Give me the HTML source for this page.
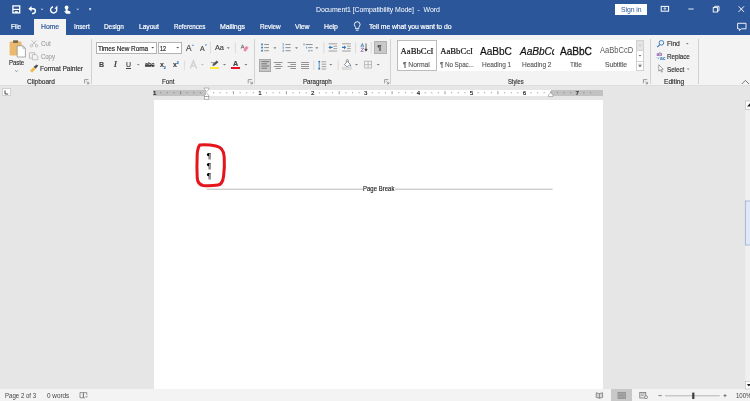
<!DOCTYPE html>
<html><head><meta charset="utf-8"><title>Word</title>
<style>
*{margin:0;padding:0;box-sizing:border-box}
html,body{width:750px;height:401px;overflow:hidden;background:#e6e6e6}
body{position:relative;font-family:"Liberation Sans","DejaVu Sans",sans-serif;font-size:7.2px;color:#444;line-height:1}
.a{position:absolute;white-space:nowrap}
#root{position:absolute;left:0;top:0;width:750px;height:401px;will-change:transform;transform:translateZ(0)}
#blue{left:0;top:0;width:750px;height:35px;background:#2b579a}
#ribbon{left:0;top:35px;width:750px;height:51.4px;background:#f3f3f3;border-bottom:1px solid #dedede}
#hometab{left:34px;top:19px;width:32px;height:17px;background:#f3f3f3}
.w{color:#fff}
.tab{-webkit-text-stroke:0.2px #fff;top:23.3px;font-size:7.9px;color:#fff;letter-spacing:-0.1px;transform:scaleX(.93);transform-origin:0 0}
.rt{-webkit-text-stroke:0.18px currentColor;font-size:7.8px;color:#333;letter-spacing:-0.1px;transform:scaleX(.92);transform-origin:0 0}
.gl{-webkit-text-stroke:0.18px currentColor;top:78.4px;font-size:7.7px;color:#333;letter-spacing:-0.05px;transform:scaleX(.93);transform-origin:0 0}
.sep{width:1px;background:#d2d2d2;top:39px;height:45px}
.ssep{width:1px;background:#d8d8d8;height:11px}
.dis{color:#a6a6a6}
.arr{width:0;height:0;border-left:1.8px solid transparent;border-right:1.8px solid transparent;border-top:2px solid #666}
svg{position:absolute;overflow:visible}
.pil{left:206.4px;font-size:8.6px;font-weight:bold;color:#000;font-family:"Liberation Serif",serif}
.st1{font-family:"Liberation Serif",serif;font-size:8.7px;color:#111;-webkit-text-stroke:0.2px #111}
.st2{font-size:11px;color:#111;letter-spacing:-0.1px;transform:scaleX(.925);transform-origin:0 0;-webkit-text-stroke:0.2px #111}
.sl{-webkit-text-stroke:0.12px currentColor;top:61px;font-size:7.7px;color:#555;letter-spacing:-0.1px;transform:scaleX(.93);transform-origin:0 0}
</style></head><body>
<div id="root">
<div class="a" id="blue"></div>
<div class="a" id="ribbon"></div>
<div class="a" id="hometab"></div>

<!-- TITLEBAR -->
<div class="a w" style="left:315.8px;top:5.5px;font-size:7.9px;letter-spacing:-0.1px;transform:scaleX(0.882);transform-origin:0 0">Document1 [Compatibility Mode]&nbsp; -&nbsp; Word</div>
<div class="a" style="left:615px;top:4.2px;width:32px;height:10.4px;background:#fff"></div>
<div class="a" style="left:620.8px;top:5.7px;font-size:7.9px;color:#2b579a;letter-spacing:-0.1px;transform:scaleX(0.870);transform-origin:0 0">Sign in</div>

<!-- TABS -->
<div class="a tab" style="left:11.3px;transform:scaleX(0.811);transform-origin:0 0">File</div>
<div class="a tab" style="left:40.7px;color:#2b579a;-webkit-text-stroke:0.2px #2b579a;transform:scaleX(0.871);transform-origin:0 0">Home</div>
<div class="a tab" style="left:73.7px;transform:scaleX(0.815);transform-origin:0 0">Insert</div>
<div class="a tab" style="left:104.3px;transform:scaleX(0.822);transform-origin:0 0">Design</div>
<div class="a tab" style="left:139.2px;transform:scaleX(0.857);transform-origin:0 0">Layout</div>
<div class="a tab" style="left:174.0px;transform:scaleX(0.793);transform-origin:0 0">References</div>
<div class="a tab" style="left:220.4px;transform:scaleX(0.881);transform-origin:0 0">Mailings</div>
<div class="a tab" style="left:260.1px;transform:scaleX(0.811);transform-origin:0 0">Review</div>
<div class="a tab" style="left:295.0px;transform:scaleX(0.875);transform-origin:0 0">View</div>
<div class="a tab" style="left:324.2px;transform:scaleX(0.871);transform-origin:0 0">Help</div>
<div class="a tab" style="left:368.5px;transform:scaleX(0.870);transform-origin:0 0">Tell me what you want to do</div>

<!-- CLIPBOARD -->
<div class="a rt" style="left:8.9px;top:59px;transform:scaleX(0.776);transform-origin:0 0">Paste</div>
<div class="a rt dis" style="left:40.5px;top:40px;transform:scaleX(0.811);transform-origin:0 0">Cut</div>
<div class="a rt dis" style="left:40.5px;top:52.6px;transform:scaleX(0.780);transform-origin:0 0">Copy</div>
<div class="a rt" style="left:40.0px;top:65.2px;transform:scaleX(0.857);transform-origin:0 0">Format Painter</div>
<div class="a gl" style="left:27.1px;transform:scaleX(0.856);transform-origin:0 0">Clipboard</div>
<div class="a sep" style="left:91px"></div>

<!-- FONT -->
<div class="a" style="left:96px;top:41.5px;width:60.5px;height:12.5px;background:#fff;border:1px solid #b4b4b4"></div>
<div class="a rt" style="left:98.0px;top:44.6px;color:#222;transform:scaleX(0.830);transform-origin:0 0">Times New Roma</div>
<div class="a" style="left:158.3px;top:41.5px;width:23.6px;height:12.5px;background:#fff;border:1px solid #b4b4b4"></div>
<div class="a rt" style="left:160.3px;top:44.6px;color:#222;transform:scaleX(0.707);transform-origin:0 0">12</div>
<div class="a rt" style="left:99.3px;top:61px;font-weight:bold;color:#444;font-size:7.6px">B</div>
<div class="a rt" style="left:113.6px;top:61px;font-style:italic;font-family:'Liberation Serif',serif;font-weight:bold;color:#444;font-size:8px">I</div>
<div class="a rt" style="left:125.8px;top:61px;color:#444;font-size:7.6px;text-decoration:underline">U</div>
<div class="a rt" style="left:145.3px;top:61.6px;color:#444;font-size:6.4px;text-decoration:line-through;font-weight:bold;letter-spacing:-0.3px">abc</div>
<div class="a rt" style="left:160px;top:61.2px;color:#444;font-size:7.6px;font-weight:bold">x<span style="font-size:4px;color:#2e75b6;vertical-align:-1.5px">2</span></div>
<div class="a rt" style="left:173.3px;top:61.2px;color:#444;font-size:7.6px;font-weight:bold">x<span style="font-size:4px;color:#2e75b6;vertical-align:3px">2</span></div>
<div class="a rt" style="left:186.4px;top:43.6px;color:#444;font-size:9px">A</div>
<div class="a rt" style="left:200px;top:44.8px;color:#444;font-size:7.6px">A</div>
<div class="a rt" style="left:215px;top:43.8px;color:#444;font-size:8px">Aa</div>
<div class="a rt" style="left:233.2px;top:60.4px;color:#444;font-size:7.8px;font-weight:bold">A</div>
<div class="a" style="left:231.3px;top:67.2px;width:9px;height:2px;background:#e81123"></div>
<div class="a" style="left:210px;top:67px;width:9px;height:2.2px;background:#ffeb3b"></div>
<div class="a gl" style="left:162.0px;transform:scaleX(0.816);transform-origin:0 0">Font</div>
<div class="a sep" style="left:254px"></div>

<!-- PARAGRAPH -->
<div class="a" style="left:259px;top:58.8px;width:12.4px;height:13px;background:#c8c8c8;border:1px solid #a8a8a8"></div>
<div class="a" style="left:374px;top:41.3px;width:12.6px;height:12.8px;background:#c8c8c8;border:1px solid #b0b0b0"></div>
<div class="a" style="left:377.3px;top:43.6px;font-size:8px;color:#444;font-weight:bold">¶</div>
<div class="a gl" style="left:303.3px;transform:scaleX(0.810);transform-origin:0 0">Paragraph</div>
<div class="a sep" style="left:390px"></div>

<!-- STYLES -->
<div class="a" style="left:397px;top:40px;width:239px;height:31px;background:#fff"></div>
<div class="a" style="left:636px;top:40px;width:8px;height:31px;background:#fff;border:1px solid #d0d0d0"></div>
<div class="a" style="left:636px;top:40px;width:8px;height:10.5px;background:#e4e4e4;border:1px solid #d0d0d0"></div>
<div class="a" style="left:636px;top:60.5px;width:8px;height:10.5px;border:1px solid #d0d0d0"></div>
<div class="a" style="left:397.3px;top:40px;width:39.6px;height:31px;border:1.7px solid #bcbcbc"></div>
<div class="a st1" style="left:400.6px;top:46.9px">AaBbCcI</div>
<div class="a st1" style="left:440.2px;top:46.9px">AaBbCcI</div>
<div class="a st2" style="left:480.4px;top:45.8px">AaBbC</div>
<div class="a st2" style="left:520px;top:45.8px;font-style:italic">AaBbC<span style="display:inline-block;width:2.3px;overflow:hidden;vertical-align:bottom">c</span></div>
<div class="a st2" style="left:560px;top:45.8px;-webkit-text-stroke:0.3px #111">AaBbC</div>
<div class="a" style="left:599.6px;top:46.2px;font-size:8.7px;color:#5a5a5a;letter-spacing:0px;transform:scaleX(.87);transform-origin:0 0">AaBbCcD</div>
<div class="a sl" style="left:403.3px;transform:scaleX(0.883);transform-origin:0 0">¶ Normal</div>
<div class="a sl" style="left:440.0px;transform:scaleX(0.823);transform-origin:0 0">¶ No Spac...</div>
<div class="a sl" style="left:481.7px;transform:scaleX(0.849);transform-origin:0 0">Heading 1</div>
<div class="a sl" style="left:521.7px;transform:scaleX(0.858);transform-origin:0 0">Heading 2</div>
<div class="a sl" style="left:570.3px;transform:scaleX(0.851);transform-origin:0 0">Title</div>
<div class="a sl" style="left:604.7px;transform:scaleX(0.886);transform-origin:0 0">Subtitle</div>
<div class="a gl" style="left:508.0px;transform:scaleX(0.756);transform-origin:0 0">Styles</div>
<div class="a sep" style="left:650px"></div>

<!-- EDITING -->
<div class="a rt" style="left:666.8px;top:39.8px;transform:scaleX(0.866);transform-origin:0 0">Find</div>
<div class="a rt" style="left:666.8px;top:52.6px;transform:scaleX(0.817);transform-origin:0 0">Replace</div>
<div class="a rt" style="left:666.8px;top:65.8px;transform:scaleX(0.816);transform-origin:0 0">Select</div>
<div class="a gl" style="left:663.8px;transform:scaleX(0.872);transform-origin:0 0">Editing</div>
<div class="a sep" style="left:698px"></div>

<!-- RULER -->
<div class="a" id="ruler" style="left:153.4px;top:89.6px;width:449.6px;height:6.2px;background:#c2c2c2"></div>
<div class="a" style="left:206px;top:89.6px;width:345px;height:6.2px;background:#fff"></div>
<div class="a" style="left:2px;top:88.4px;width:8.6px;height:7.8px;background:#fff;border:1px solid #d0d0d0"></div>

<!-- DOC -->
<div class="a" id="page" style="left:154px;top:99.5px;width:449.4px;height:290px;background:#fff"></div>

<div class="a pil" style="top:151.6px">¶</div>
<div class="a pil" style="top:162.2px">¶</div>
<div class="a pil" style="top:172px">¶</div>
<div class="a" style="left:363.3px;top:185.6px;font-size:6.4px;color:#222;letter-spacing:0.05px;-webkit-text-stroke:0.15px #222;transform:scaleX(0.926);transform-origin:0 0">Page Break</div>
<!-- STATUS -->
<div class="a" id="status" style="left:0;top:389px;width:750px;height:12px;background:#f3f3f3"></div>
<div class="a" style="left:611.3px;top:389.4px;width:21px;height:11.6px;background:#c8c8c8"></div>
<div class="a" style="left:4.9px;top:392.8px;font-size:6.8px;color:#444;transform:scaleX(0.894);transform-origin:0 0">Page 2 of 3</div>
<div class="a" style="left:46.7px;top:392.8px;font-size:6.8px;color:#444;transform:scaleX(0.936);transform-origin:0 0">0 words</div>
<div class="a" style="left:735.5px;top:392.8px;font-size:6.6px;color:#444;transform:scaleX(0.919);transform-origin:0 0">100%</div>

<!-- ICONS -->
<svg id="ico" style="left:0;top:0" width="750" height="401" viewBox="0 0 750 401" fill="none">
<!--ICONS_BEGIN-->
<!-- ===== title bar icons ===== -->
<g stroke="#fff" stroke-width="1" fill="none">
  <rect x="12.9" y="5.9" width="6.8" height="7" stroke-width="1.3"/>
  <path d="M13 9.4 H19.6" stroke-width="1.2"/>
  <rect x="14.8" y="11.2" width="3" height="1.8" fill="#fff" stroke="none"/>
  <!-- undo -->
  <path d="M29 8.7 H33 a2.4 2.4 0 0 1 0 4.8 H32" stroke-width="1.5"/>
  <path d="M31.6 5.9 L28.4 8.7 L31.6 11.5 Z" fill="#fff" stroke="none"/>
  <!-- redo -->
  <path d="M53 6.8 A3.1 3.1 0 1 0 56.4 8.4" stroke-width="1.4"/>
  <path d="M54.4 8.8 H57.4 V5.6 Z" fill="#fff" stroke="none"/>
  <!-- window buttons -->
  <path d="M688.4 9 H693.6" stroke-width="0.9"/>
  <rect x="713.2" y="7.6" width="4.4" height="4.4" stroke-width="0.9"/>
  <path d="M714.6 7.6 V6.3 H719 V10.7 H717.6" stroke-width="0.9"/>
  <path d="M738.6 6.3 L744 11.9 M744 6.3 L738.6 11.9" stroke-width="0.95"/>
  <!-- ribbon display -->
  <rect x="661.2" y="6.4" width="7.4" height="4.8" stroke-width="1"/>
  <path d="M664.9 10.2 V7.8 M663.6 8.9 L664.9 7.6 L666.2 8.9" stroke-width="0.8"/>
  <!-- comment -->
  <path d="M737.6 23.3 H746 V28.8 H741.4 L739.4 30.6 V28.8 H737.6 Z" stroke-width="0.9"/>
  <!-- lightbulb -->
  <path d="M355.6 28.6 V27.6 C355.6 26.6 354.3 26 354.3 24.6 A2.9 2.9 0 0 1 360.1 24.6 C360.1 26 358.8 26.6 358.8 27.6 V28.6 Z M355.8 30.2 H358.6" stroke-width="0.9"/>
</g>
<g fill="#fff">
  <!-- touch mode -->
  <circle cx="66.6" cy="7.4" r="1.9"/>
  <path d="M65.6 9 H67.6 V10.6 L70.4 11.4 V13.8 H66.4 L64.2 11.6 L64.9 10.9 L65.6 11.4 Z"/>
  <!-- customize -->
  <rect x="89" y="8.1" width="2.2" height="0.7"/>
  <path d="M89 9.3 H91.2 L90.1 10.5 Z"/>
</g>
<g fill="#c3d0e8">
  <path d="M40.6 8.7 H43.4 L42 10.2 Z"/>
  <path d="M76.4 8.7 H79.2 L77.8 10.2 Z"/>
</g>

<!-- ===== clipboard group ===== -->
<rect x="9.6" y="41.6" width="12" height="14" rx="0.8" fill="#e9b96e"/>
<rect x="13" y="40.3" width="5.2" height="2.6" rx="0.6" fill="#7a6a4f"/>
<path d="M17.2 45.8 H23 L25.4 48.2 V57 H17.2 Z" fill="#fff" stroke="#8a8a8a" stroke-width="0.7"/>
<path d="M23 45.8 V48.2 H25.4" stroke="#8a8a8a" stroke-width="0.6"/>
<path d="M15.2 70.4 L16.5 71.7 L17.8 70.4" stroke="#666" stroke-width="0.7"/>
<!-- cut (disabled) -->
<g stroke="#b4b4b4" stroke-width="0.8">
  <path d="M31.6 40.4 L36 45 M36.4 40.4 L32 45"/>
  <circle cx="31.4" cy="45.8" r="1.2"/><circle cx="36.6" cy="45.8" r="1.2"/>
</g>
<!-- copy (disabled) -->
<g stroke="#b4b4b4" stroke-width="0.8" fill="#f3f3f3">
  <rect x="29.6" y="52.8" width="5" height="5.4"/>
  <path d="M32.4 54.6 H36 L37.8 56.2 V59.8 H32.4 Z"/>
</g>
<!-- format painter -->
<path d="M30 70.8 L33.4 67.2 L35.4 69 L32.2 72.4 Z" fill="#efb73e"/>
<path d="M33.6 66.8 L36.8 64.4 L38.2 65.8 L35.6 68.8 Z" fill="#4a4a4a"/>
<!-- launchers -->
<g id="lnch" stroke="#777" stroke-width="0.7">
  <path d="M84.6 83.4 V79.6 H88.4"/>
  <path d="M86.4 81.4 L88.6 83.6 M88.8 81.8 V83.8 H86.8"/>
</g>
<use href="#lnch" x="163.6"/>
<use href="#lnch" x="300"/>
<use href="#lnch" x="558.8"/>

<!-- ===== font group ===== -->
<g fill="#555">
  <path d="M151.2 47 H154.2 L152.7 48.6 Z"/>
  <path d="M176.2 47 H179.2 L177.7 48.6 Z"/>
  <path d="M136.9 64 H139.7 L138.3 65.5 Z" fill="#888"/>
  <path d="M226.8 47.3 H229.8 L228.3 48.9 Z" fill="#777"/>
  <path d="M201 64 H203.8 L202.4 65.5 Z" fill="#bbb"/>
  <path d="M223 64 H226 L224.5 65.6 Z" fill="#777"/>
  <path d="M244.4 64 H247.4 L245.9 65.6 Z" fill="#777"/>
</g>
<!-- grow/shrink arrows -->
<path d="M191.8 45.8 L192.9 44.4 L194 45.8 Z" fill="#2e75b6"/>
<path d="M204.8 44.6 L205.9 46 L207 44.6 Z" fill="#2e75b6"/>
<!-- separators -->
<g stroke="#d4d4d4" stroke-width="0.8">
  <path d="M210.4 42 V53.5 M235.4 42 V53.5 M184.4 60.5 V70 M323.8 42 V53.5 M355.6 42 V53.5 M371.2 42 V53.5 M313.8 60.5 V70 M338.2 60.5 V70"/>
</g>
<!-- clear formatting -->
<path d="M243.2 50.2 L246.2 45.8 L248.6 47.4 L245.6 51.8 Z" fill="#ee8aa6"/>
<path d="M241 48.6 L242.6 44.8 L244.2 48.6 M241.6 47.4 H243.6" stroke="#555" stroke-width="0.7"/>
<!-- text effects A -->
<path d="M190.2 68.4 L193.4 61 L196.6 68.4 M191.4 65.8 H195.4" stroke="#c3c3c3" stroke-width="1.3"/>
<path d="M190.2 68.4 L193.4 61 L196.6 68.4 M191.4 65.8 H195.4" stroke="#f3f3f3" stroke-width="0.4"/>
<!-- highlighter pen -->
<path d="M212.4 66 L213 63.8 L216.8 60.6 L218.4 62.2 L214.6 65.6 Z" fill="#555"/>
<path d="M210.8 62.6 h3.2" stroke="#666" stroke-width="0.6"/>
<!-- ===== paragraph group ===== -->
<!-- bullets -->
<g fill="#2e75b6"><rect x="261.2" y="43.6" width="1.7" height="1.7"/><rect x="261.2" y="46.7" width="1.7" height="1.7"/><rect x="261.2" y="49.8" width="1.7" height="1.7"/></g>
<g stroke="#777" stroke-width="0.8"><path d="M264.2 44.5 H269 M264.2 47.6 H269 M264.2 50.7 H269"/></g>
<!-- numbering -->
<g stroke="#2e75b6" stroke-width="0.7"><path d="M283.2 43.2 V45.6 M283.2 46.4 V48.8 M283.2 49.6 V52"/></g>
<g stroke="#777" stroke-width="0.8"><path d="M285.4 44.5 H290.6 M285.4 47.6 H290.6 M285.4 50.7 H290.6"/></g>
<!-- multilevel -->
<g stroke="#2e75b6" stroke-width="0.7"><path d="M304 43.4 V45.4 M306.6 46.6 V48.6 M309 49.8 V51.8"/></g>
<g stroke="#777" stroke-width="0.8"><path d="M305.6 44.5 H312.6 M308.2 47.6 H312.6 M310.6 50.7 H312.6"/></g>
<g fill="#777">
  <path d="M273.4 47.3 H276.4 L274.9 48.9 Z"/>
  <path d="M295 47.3 H298 L296.5 48.9 Z"/>
  <path d="M315.4 47.3 H318.4 L316.9 48.9 Z"/>
  <path d="M329.3 64 H332.3 L330.8 65.6 Z"/>
  <path d="M355 64 H358 L356.5 65.6 Z"/>
  <path d="M376.7 64 H379.7 L378.2 65.6 Z"/>
</g>
<!-- decrease indent -->
<g stroke="#8a8a8a" stroke-width="0.8"><path d="M328.6 43.8 H337.2 M333.4 46.2 H337.2 M333.4 48.6 H337.2 M328.6 51 H337.2"/></g>
<path d="M328.4 47.4 L330.6 45.6 V46.8 H332.6 V48 H330.6 V49.2 Z" fill="#2e75b6"/>
<!-- increase indent -->
<g stroke="#8a8a8a" stroke-width="0.8"><path d="M342 43.8 H350.8 M347 46.2 H350.8 M347 48.6 H350.8 M342 51 H350.8"/></g>
<path d="M346.2 47.4 L344 45.6 V46.8 H342 V48 H344 V49.2 Z" fill="#2e75b6"/>
<!-- sort -->
<path d="M360.8 47 L362.3 43.4 L363.8 47 M361.3 45.9 H363.3" stroke="#2e75b6" stroke-width="0.7"/>
<path d="M360.9 48.2 H363.7 L360.9 51.4 H363.7" stroke="#8a4fa8" stroke-width="0.7"/>
<path d="M366 43.4 V50 M364.8 49.2 L366 51.2 L367.2 49.2 Z" stroke="#444" stroke-width="0.8" fill="#444"/>
<!-- align left (selected) -->
<g stroke="#666" stroke-width="0.8"><path d="M261.4 61.6 H269.2 M261.4 63.8 H267 M261.4 66 H269.2 M261.4 68.2 H267"/></g>
<!-- center -->
<g stroke="#7a7a7a" stroke-width="0.8"><path d="M273.8 62.5 H282.6 M275.6 64.5 H280.8 M273.8 66.5 H282.6 M275.6 68.5 H280.8"/></g>
<!-- right -->
<g stroke="#7a7a7a" stroke-width="0.8"><path d="M287.6 62.5 H296 M290.4 64.5 H296 M287.6 66.5 H296 M290.4 68.5 H296"/></g>
<!-- justify -->
<g stroke="#7a7a7a" stroke-width="0.8"><path d="M301 62.5 H309 M301 64.5 H309 M301 66.5 H309 M301 68.5 H309"/></g>
<!-- line spacing -->
<g stroke="#8a8a8a" stroke-width="0.8"><path d="M321.6 61.8 H326.2 M321.6 64.2 H326.2 M321.6 66.6 H326.2 M321.6 69 H326.2"/></g>
<path d="M319.2 61 V69.4" stroke="#2e75b6" stroke-width="0.8"/>
<path d="M317.9 62.2 L319.2 60.4 L320.5 62.2 Z M317.9 68.2 L319.2 70 L320.5 68.2 Z" fill="#2e75b6"/>
<!-- shading -->
<path d="M344.4 64.6 L347.4 61.4 L350.4 64.4 L347.2 67 Z" fill="#fff" stroke="#666" stroke-width="0.7"/>
<path d="M346.4 62.2 V60.6 a1 1 0 0 1 2 0 V62" stroke="#666" stroke-width="0.6"/>
<path d="M350.6 64.6 q1 1.4 0 2.2 q-1 -0.8 0 -2.2" fill="#2e75b6"/>
<rect x="342.6" y="67.6" width="8.6" height="1.8" fill="#e2e2e2" stroke="#b8b8b8" stroke-width="0.4"/>
<!-- borders -->
<g stroke="#b0b0b0" stroke-width="0.8"><rect x="364.6" y="61.2" width="7" height="6.8"/><path d="M368.1 61.2 V68 M364.6 64.6 H371.6"/></g>

<!-- ===== styles scroll buttons ===== -->
<path d="M638.6 46 H641.4 L640 44.4 Z" fill="#c0c0c0"/>
<path d="M638.6 55 H641.4 L640 56.6 Z" fill="#666"/>
<path d="M638.6 64.2 H641.4 M638.6 65.4 H641.4 L640 67 Z" fill="#666" stroke="#666" stroke-width="0.5"/>

<!-- ===== editing ===== -->
<circle cx="661.4" cy="42.8" r="2.3" stroke="#2e75b6" stroke-width="0.9"/>
<path d="M659.8 44.6 L657.2 47.2" stroke="#2e75b6" stroke-width="1.1"/>
<path d="M685.8 42.9 H688.8 L687.3 44.5 Z M686.6 68.5 H689.6 L688.1 70.1 Z" fill="#888"/>
<text x="656.6" y="55.6" font-family="Liberation Sans, sans-serif" font-size="5" fill="#8a4fa8" font-weight="bold">ab</text>
<text x="660" y="59.6" font-family="Liberation Sans, sans-serif" font-size="5" fill="#2e75b6" font-weight="bold">ac</text>
<path d="M657 57.4 L658.2 58.6 L659.4 57.6" stroke="#2e75b6" stroke-width="0.6"/>
<path d="M658.8 64.8 V71.2 L660.4 69.8 L661.6 72.2 L662.4 71.8 L661.3 69.5 L663.3 69.3 Z" fill="#fff" stroke="#666" stroke-width="0.6"/>
<!-- collapse caret -->
<path d="M741.8 84 L745.4 80.4 L749 84" stroke="#555" stroke-width="0.8"/>
<!-- ===== ruler ===== -->
<path d="M160.7 92.2 V93.3 M167.3 92.2 V93.3 M173.9 92.2 V93.3 M180.6 91.2 V94.2 M187.2 92.2 V93.3 M193.8 92.2 V93.3 M200.4 92.2 V93.3 M213.6 92.2 V93.3 M220.2 92.2 V93.3 M226.8 92.2 V93.3 M233.4 91.2 V94.2 M240.1 92.2 V93.3 M246.7 92.2 V93.3 M253.3 92.2 V93.3 M266.5 92.2 V93.3 M273.1 92.2 V93.3 M279.7 92.2 V93.3 M286.4 91.2 V94.2 M293.0 92.2 V93.3 M299.6 92.2 V93.3 M306.2 92.2 V93.3 M319.4 92.2 V93.3 M326.0 92.2 V93.3 M332.6 92.2 V93.3 M339.2 91.2 V94.2 M345.9 92.2 V93.3 M352.5 92.2 V93.3 M359.1 92.2 V93.3 M372.3 92.2 V93.3 M378.9 92.2 V93.3 M385.5 92.2 V93.3 M392.1 91.2 V94.2 M398.8 92.2 V93.3 M405.4 92.2 V93.3 M412.0 92.2 V93.3 M425.2 92.2 V93.3 M431.8 92.2 V93.3 M438.4 92.2 V93.3 M445.0 91.2 V94.2 M451.7 92.2 V93.3 M458.3 92.2 V93.3 M464.9 92.2 V93.3 M478.1 92.2 V93.3 M484.7 92.2 V93.3 M491.3 92.2 V93.3 M497.9 91.2 V94.2 M504.6 92.2 V93.3 M511.2 92.2 V93.3 M517.8 92.2 V93.3 M531.0 92.2 V93.3 M537.6 92.2 V93.3 M544.2 92.2 V93.3 M550.8 91.2 V94.2 M557.5 92.2 V93.3 M564.1 92.2 V93.3 M570.7 92.2 V93.3 M583.9 92.2 V93.3 M590.5 92.2 V93.3" stroke="#6f6f6f" stroke-width="0.7"/>
<text x="154.7" y="95.1" text-anchor="middle" font-family="Liberation Sans, sans-serif" font-size="6.2" fill="#1a1a1a" stroke="#1a1a1a" stroke-width="0.15">1</text>
<text x="259.9" y="95.1" text-anchor="middle" font-family="Liberation Sans, sans-serif" font-size="6.2" fill="#1a1a1a" stroke="#1a1a1a" stroke-width="0.15">1</text>
<text x="312.8" y="95.1" text-anchor="middle" font-family="Liberation Sans, sans-serif" font-size="6.2" fill="#1a1a1a" stroke="#1a1a1a" stroke-width="0.15">2</text>
<text x="365.7" y="95.1" text-anchor="middle" font-family="Liberation Sans, sans-serif" font-size="6.2" fill="#1a1a1a" stroke="#1a1a1a" stroke-width="0.15">3</text>
<text x="418.6" y="95.1" text-anchor="middle" font-family="Liberation Sans, sans-serif" font-size="6.2" fill="#1a1a1a" stroke="#1a1a1a" stroke-width="0.15">4</text>
<text x="471.5" y="95.1" text-anchor="middle" font-family="Liberation Sans, sans-serif" font-size="6.2" fill="#1a1a1a" stroke="#1a1a1a" stroke-width="0.15">5</text>
<text x="524.4" y="95.1" text-anchor="middle" font-family="Liberation Sans, sans-serif" font-size="6.2" fill="#1a1a1a" stroke="#1a1a1a" stroke-width="0.15">6</text>
<text x="577.3" y="95.1" text-anchor="middle" font-family="Liberation Sans, sans-serif" font-size="6.2" fill="#1a1a1a" stroke="#1a1a1a" stroke-width="0.15">7</text>
<g fill="#fff" stroke="#8a8a8a" stroke-width="0.6"><path d="M204.4 88 H208.8 V89.6 L206.6 91.6 L204.4 89.6 Z"/><path d="M204.4 96.6 V95.2 L206.6 93.2 L208.8 95.2 V96.6 Z"/><rect x="204.4" y="96.6" width="4.4" height="2.6"/><path d="M548.4 96.6 V95 L550.7 92.6 L553 95 V96.6 Z"/></g>
<path d="M5 90.4 V94 H8.2" stroke="#444" stroke-width="1"/>
<!-- ===== document ===== -->
<path d="M206.6 189.2 H363 M395 189.2 H552.6" stroke="#a8a8a8" stroke-width="0.8"/>
<path d="M199.8 145 C205 144.6 211 145 216 146 C221.4 147 224 151 224.2 157 C224.6 163 224.4 170 223.6 176 C223 181 221.6 184.6 218 185 C213 185.8 208 186 203.4 185.6 C199.6 185 197.6 182.4 197.2 178 C196.8 170 196.9 162 197.2 154.5 C197.4 150.4 198.2 147 199.8 145 Z" stroke="#e4151d" stroke-width="3" stroke-linejoin="miter"/>
<!-- ===== status bar ===== -->
<g stroke="#6a6a6a" stroke-width="0.7"><path d="M83.4 393.2 V397.8 M80 392.6 H83.4 V397.8 H80 Z M83.4 392.6 H86.8 V395 M83.4 397.8 H85"/><path d="M85.6 396.4 L86.4 397.4 L87.6 395.8"/><path d="M599.4 393.6 V398.2 M596.2 392.8 L599.4 393.6 L602.6 392.8 V397.4 L599.4 398.2 L596.2 397.4 Z" fill="#d8d8d8"/><rect x="618" y="392.4" width="7.6" height="6.2" fill="#a9a9a9" stroke="#8a8a8a"/><path d="M619.2 394 H624.4 M619.2 395.5 H624.4 M619.2 397 H624.4" stroke="#8a8a8a" stroke-width="0.5"/><rect x="639.8" y="392.4" width="6" height="5.6" fill="#e6e6e6"/><path d="M640.8 394 H644.8 M640.8 395.4 H643.4" stroke-width="0.5"/><circle cx="646" cy="397.2" r="1.5" fill="#f3f3f3"/></g>
<path d="M658.4 395.6 H661.8 M723.4 395.6 H726.6 M725 394 V397.2" stroke="#555" stroke-width="0.7"/>
<path d="M665 395.8 H719.8" stroke="#8c8c8c" stroke-width="0.6"/>
<rect x="692.2" y="392.6" width="2.2" height="6.4" fill="#3c3c3c"/>
<!-- ===== scrollbar ===== -->
<rect x="745.3" y="101" width="5" height="288" fill="#f0f0f0"/>
<rect x="745.3" y="101" width="5" height="8.4" fill="#fff" stroke="#b4b4b4" stroke-width="0.6"/>
<path d="M747 106.4 L750.4 102.8 V106.4 Z" fill="#222"/>
<rect x="745.3" y="201" width="6" height="44" fill="#dfe8f7" stroke="#8fa3c6" stroke-width="0.7"/>
<rect x="745.3" y="381.4" width="5" height="7.6" fill="#fff" stroke="#b4b4b4" stroke-width="0.6"/>
<path d="M746.8 384 H751 L748.9 386.6 Z" fill="#222"/>
<!--ICONS_END-->
</svg>
</div>
</body></html>
